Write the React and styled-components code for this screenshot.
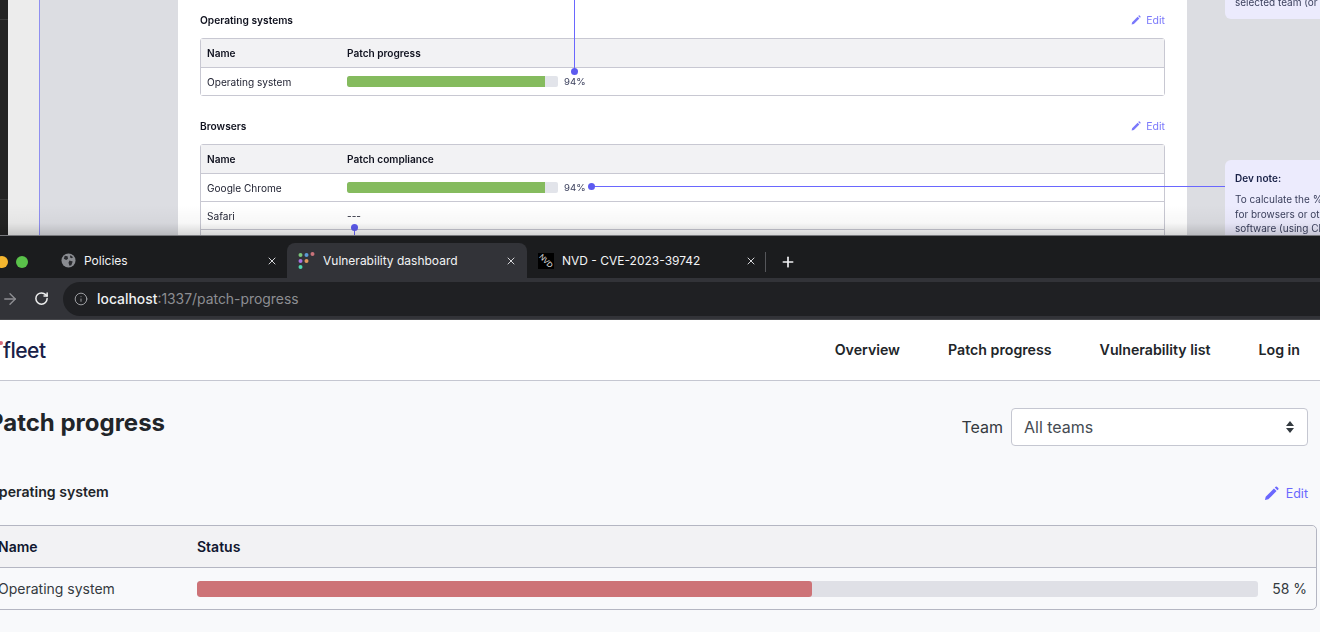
import React from "react";
import styled, { createGlobalStyle } from "styled-components";
import { X, Plus, ArrowRight, RotateCw, Info } from "lucide-react";

const GlobalStyle = createGlobalStyle`
  html, body {
    margin: 0;
    padding: 0;
    background: #f8f9fb;
  }
  body {
    width: 1320px;
    height: 632px;
    overflow: hidden;
    font-family: "Inter", "Liberation Sans", sans-serif;
  }
  * { box-sizing: border-box; }
`;

const PencilIcon = ({ size }) => (
  <svg width={size} height={size} viewBox="0 0 16 16" fill="currentColor">
    <path d="M1 15l.8-3.6L10.600 2.600l2.800 2.800-8.800 8.800L1 15zM11.500 1.700l.9-.9a1 1 0 0 1 1.400 0l1.400 1.400a1 1 0 0 1 0 1.400l-.9.9-2.800-2.800z" />
  </svg>
);

const Globe = () => (
  <svg width="15" height="15" viewBox="0 0 16 16">
    <circle cx="8" cy="8" r="7.500" fill="#8a8c91" />
    <path d="M4 3l3 .5.5 2.500-2 1.500L3 6zM9 8l3.500 1-1.500 4-2 .5-1-3zM10 2.500l3 2-2 1-1.500-1z" fill="#2a2b2f" />
  </svg>
);

const FigmaDots = () => (
  <svg width="17" height="18" viewBox="0 0 17 18">
    <circle cx="2.500" cy="3" r="2" fill="#7bc67a" />
    <circle cx="8.500" cy="3" r="2" fill="#5b9bd5" />
    <circle cx="14.500" cy="2" r="2" fill="#c9737a" />
    <circle cx="2.500" cy="9" r="2" fill="#a970e0" />
    <circle cx="8.500" cy="9" r="2" fill="#e0975b" />
    <circle cx="2.500" cy="15" r="2" fill="#4fd6b0" />
  </svg>
);

const NvdIcon = () => (
  <svg width="16" height="16" viewBox="0 0 16 16">
    <rect width="16" height="16" fill="#000" />
    <text
      x="8"
      y="10.500"
      fontSize="7.500"
      fill="#e8e8e8"
      textAnchor="middle"
      fontFamily="Liberation Sans, sans-serif"
      transform="rotate(45 8 8)"
    >
      NVD
    </text>
  </svg>
);

const SelectArrows = () => (
  <svg width="8" height="12" viewBox="0 0 8 12" fill="#343a40">
    <path d="M0 5l4-5 4 5zM0 7l4 5 4-5z" />
  </svg>
);

const MockProgress = ({ value }) => (
  <MockBarWrap>
    <MockTrack>
      <MockFill style={{ width: `${value}%` }} />
    </MockTrack>
    <MockPercent>{value}%</MockPercent>
  </MockBarWrap>
);

const App = () => (
  <Screen>
    <GlobalStyle />

    <FigmaArea>
      <Rail />
      <Sidebar />
      <Card>
        <MockHead>
          <MockTitle>Operating systems</MockTitle>
          <MockEdit>
            <PencilIcon size={10} />
            Edit
          </MockEdit>
        </MockHead>
        <MockTable>
          <MockRow $head>
            <span>Name</span>
            <span>Patch progress</span>
          </MockRow>
          <MockRow>
            <span>Operating system</span>
            <MockProgress value={94} />
          </MockRow>
        </MockTable>

        <MockHead $spaced>
          <MockTitle>Browsers</MockTitle>
          <MockEdit>
            <PencilIcon size={10} />
            Edit
          </MockEdit>
        </MockHead>
        <MockTable>
          <MockRow $head>
            <span>Name</span>
            <span>Patch compliance</span>
          </MockRow>
          <MockRow>
            <span>Google Chrome</span>
            <MockProgress value={94} />
          </MockRow>
          <MockRow>
            <span>Safari</span>
            <span>---</span>
          </MockRow>
          <MockRow />
        </MockTable>
      </Card>
      <Notes>
        <Note $clipped>
          <NoteText>selected team (or</NoteText>
        </Note>
        <Note>
          <NoteTitle>Dev note:</NoteTitle>
          <NoteText>
            To calculate the %
            <br />
            for browsers or oth
            <br />
            software (using Ch
          </NoteText>
        </Note>
      </Notes>

      <PinLine $x={574} $y={0} $h={71} />
      <PinDot $x={574} $y={71} />
      <PinLine $horizontal $x={591} $y={186} $w={634} />
      <PinDot $x={591} $y={186} />
      <PinLine $x={354} $y={227} $h={8} />
      <PinDot $x={354} $y={227} />
      <Fade />
    </FigmaArea>

    <BrowserBar>
      <TabStrip>
        <Lights>
          <Light $color="#f4b62f" />
          <Light $color="#5ac24a" />
        </Lights>
        <Tab $width={226} $left={0} $right={9}>
          <Globe />
          <TabLabel>Policies</TabLabel>
          <TabClose>
            <X size={12} strokeWidth={2} />
          </TabClose>
        </Tab>
        <Tab $active $width={240} $left={11} $right={10}>
          <FigmaDots />
          <TabLabel>Vulnerability dashboard</TabLabel>
          <TabClose>
            <X size={12} strokeWidth={2} />
          </TabClose>
        </Tab>
        <Tab $width={238} $left={11} $right={8}>
          <NvdIcon />
          <TabLabel>NVD - CVE-2023-39742</TabLabel>
          <TabClose>
            <X size={12} strokeWidth={2} />
          </TabClose>
        </Tab>
        <TabDivider />
        <NewTab>
          <Plus size={16} strokeWidth={2.5} />
        </NewTab>
      </TabStrip>
      <Toolbar>
        <NavArrow>
          <ArrowRight size={18} strokeWidth={1.8} />
        </NavArrow>
        <Reload>
          <RotateCw size={15} strokeWidth={2.4} />
        </Reload>
        <UrlPill>
          <Info size={14} strokeWidth={1.6} color="#a5a6aa" />
          <Url>
            <b>localhost</b>:1337/patch-progress
          </Url>
        </UrlPill>
      </Toolbar>
    </BrowserBar>

    <Page>
      <Header>
        <Logo>
          <LogoDot />
          fleet
        </Logo>
        <Nav>
          <NavLink>Overview</NavLink>
          <NavLink>Patch progress</NavLink>
          <NavLink>Vulnerability list</NavLink>
          <NavLink>Log in</NavLink>
        </Nav>
      </Header>
      <Main>
        <TitleRow>
          <Title>Patch progress</Title>
          <TeamPicker>
            <TeamLabel>Team</TeamLabel>
            <TeamSelect>
              All teams
              <SelectArrows />
            </TeamSelect>
          </TeamPicker>
        </TitleRow>
        <SectionHead>
          <SectionTitle>Operating system</SectionTitle>
          <EditLink>
            <PencilIcon size={15} />
            Edit
          </EditLink>
        </SectionHead>
        <Table>
          <TableHead>
            <span>Name</span>
            <span>Status</span>
          </TableHead>
          <TableRow>
            <span>Operating system</span>
            <Progress>
              <Track>
                <Fill style={{ width: "58%" }} />
              </Track>
              <Percent>58 %</Percent>
            </Progress>
          </TableRow>
        </Table>
      </Main>
    </Page>
  </Screen>
);

export default App;

const Screen = styled.div`
  width: 1320px;
  height: 632px;
  overflow: hidden;
  background: #f8f9fb;
`;

const FigmaArea = styled.section`
  position: relative;
  display: flex;
  height: 235px;
  overflow: hidden;
  background: #dcdde2;
  color: #192147;
  font-size: 10.100px;
`;

const Rail = styled.div`
  flex: 0 0 8px;
  background: linear-gradient(
    #232323 0 19px,
    #3a3a3a 19px 20px,
    #232323 20px 199px,
    #3a3a3a 199px 200px,
    #232323 200px
  );
`;

const Sidebar = styled.div`
  flex: 0 0 170px;
  background: linear-gradient(90deg, #ececec 0 31px, #8f8ff0 31px 32px, #dcdde2 32px);
`;

const Card = styled.div`
  flex: 0 0 1009px;
  padding: 13px 22px 0;
  background: #fff;
  filter: blur(0.3px);
`;

const MockHead = styled.div`
  display: flex;
  justify-content: space-between;
  align-items: center;
  height: 14px;
  margin-top: ${(p) => (p.$spaced ? "23px" : "0")};
  margin-bottom: 11px;
`;

const MockTitle = styled.h3`
  margin: 0;
  font-size: 10.200px;
  font-weight: 600;
  color: #10121f;
`;

const MockEdit = styled.span`
  display: flex;
  align-items: center;
  gap: 5px;
  margin-left: -1px;
  color: #7a78fb;
  font-size: 10.500px;
`;

const MockTable = styled.div`
  border: 1px solid #c8c8d2;
  border-radius: 3px;
`;

const MockRow = styled.div`
  display: grid;
  grid-template-columns: 140px 1fr;
  align-items: center;
  height: 28px;
  padding: 0 6px;
  background: ${(p) => (p.$head ? "#f2f2f4" : "#fff")};
  font-weight: ${(p) => (p.$head ? 600 : 400)};
  color: ${(p) => (p.$head ? "#10121f" : "#1c1e2e")};

  & + & {
    border-top: 1px solid #c8c8d2;
  }
`;

const MockBarWrap = styled.div`
  display: flex;
  align-items: center;
  gap: 6px;
`;

const MockTrack = styled.div`
  width: 211px;
  height: 11px;
  border-radius: 2px;
  background: #e2e4ea;
  overflow: hidden;
`;

const MockFill = styled.div`
  height: 100%;
  border-radius: 2px 0 0 2px;
  background: #85bb5e;
`;

const MockPercent = styled.span`
  font-size: 9.600px;
  color: #3a3f5c;
`;

const Notes = styled.aside`
  display: flex;
  flex-direction: column;
  flex: 0 0 auto;
  gap: 141px;
  margin-left: 38px;
  margin-top: -20px;
  filter: blur(0.3px);
`;

const Note = styled.div`
  flex-shrink: 0;
  width: 180px;
  height: ${(p) => (p.$clipped ? "39px" : "100px")};
  padding: ${(p) => (p.$clipped ? "15px 10px 0" : "12px 10px 0")};
  border-radius: 6px;
  background: #ecebfd;
`;

const NoteTitle = styled.div`
  margin-bottom: 8px;
  font-size: 10px;
  line-height: 12px;
  font-weight: 600;
  color: #192147;
`;

const NoteText = styled.div`
  font-size: 10px;
  line-height: 14.500px;
  color: #3a3f5c;
`;

const PinLine = styled.div`
  position: absolute;
  left: ${(p) => p.$x}px;
  top: ${(p) => p.$y}px;
  width: ${(p) => (p.$horizontal ? `${p.$w}px` : "1px")};
  height: ${(p) => (p.$horizontal ? "1px" : `${p.$h}px`)};
  background: #6a67fe;
`;

const PinDot = styled.div`
  position: absolute;
  left: ${(p) => p.$x - 3}px;
  top: ${(p) => p.$y - 3}px;
  width: 7px;
  height: 7px;
  border-radius: 50%;
  background: #5d5bf0;
`;

const Fade = styled.div`
  position: absolute;
  left: 0;
  right: 0;
  bottom: 0;
  height: 30px;
  background: linear-gradient(
    rgba(0, 0, 0, 0),
    rgba(0, 0, 0, 0.03) 60%,
    rgba(0, 0, 0, 0.16)
  );
  pointer-events: none;
`;

const BrowserBar = styled.div`
  height: 85px;
  border-top: 1px solid #77787c;
  background: #1b1c1e;
  color: #e8e9eb;
`;

const TabStrip = styled.div`
  display: flex;
  align-items: flex-end;
  height: 42px;
  padding-top: 7px;
`;

const Lights = styled.div`
  display: flex;
  gap: 8px;
  flex: 0 0 65px;
  align-self: center;
  margin-left: -4px;
  margin-top: 2px;
`;

const Light = styled.div`
  width: 12px;
  height: 12px;
  border-radius: 50%;
  background: ${(p) => p.$color};
`;

const Tab = styled.div`
  display: flex;
  align-items: center;
  flex: 0 0 ${(p) => p.$width}px;
  height: 35px;
  gap: 8px;
  padding: 0 ${(p) => p.$right}px 0 ${(p) => p.$left}px;
  border-radius: 8px 8px 0 0;
  background: ${(p) => (p.$active ? "#323338" : "transparent")};
  font-size: 12px;
  color: #f2f3f5;
`;

const TabLabel = styled.span`
  flex: 1;
  white-space: nowrap;
  overflow: hidden;
`;

const TabClose = styled.span`
  display: flex;
  color: #d6d7da;
`;

const TabDivider = styled.div`
  flex: 0 0 1px;
  align-self: center;
  height: 20px;
  margin-top: 3px;
  background: #55565a;
`;

const NewTab = styled.div`
  display: flex;
  align-self: center;
  margin: 2px 0 0 14px;
  color: #f1f1f3;
`;

const Toolbar = styled.div`
  display: flex;
  align-items: center;
  height: 42px;
  background: #323338;
  border-bottom: 1px solid #46474b;
`;

const NavArrow = styled.div`
  display: flex;
  margin-left: 1px;
  color: #8e8f93;
`;

const Reload = styled.div`
  display: flex;
  margin-left: 15px;
  color: #eceded;
`;

const UrlPill = styled.div`
  display: flex;
  align-items: center;
  flex: 1;
  gap: 9px;
  height: 34px;
  margin-left: 14px;
  padding-left: 11px;
  border-radius: 17px 0 0 17px;
  background: #1f2023;
`;

const Url = styled.span`
  font-size: 13.900px;
  color: #8d8e92;

  b {
    font-weight: 500;
    color: #eef0f2;
  }
`;

const Page = styled.div`
  color: #212529;
`;

const Header = styled.header`
  display: flex;
  justify-content: space-between;
  align-items: center;
  height: 61px;
  padding-right: 20px;
  background: #fff;
  border-bottom: 1px solid #c5c7d1;
`;

const Logo = styled.div`
  position: relative;
  margin-left: 3px;
  font-size: 21px;
  font-weight: 500;
  letter-spacing: -0.5px;
  color: #192147;
`;

const LogoDot = styled.span`
  position: absolute;
  left: -4px;
  top: 3px;
  width: 4px;
  height: 4px;
  border-radius: 50%;
  background: #d66c7b;
`;

const Nav = styled.nav`
  display: flex;
  gap: 48px;
  margin-top: -1px;
`;

const NavLink = styled.a`
  font-size: 14.200px;
  font-weight: 600;
  color: #212529;
`;

const Main = styled.main`
  margin-left: -12px;
  padding-right: 12px;
`;

const TitleRow = styled.div`
  display: flex;
  justify-content: space-between;
  align-items: flex-start;
  height: 86px;
  padding-top: 27px;
`;

const Title = styled.h1`
  margin: 0;
  font-size: 24px;
  line-height: 29px;
  font-weight: 700;
`;

const TeamPicker = styled.div`
  display: flex;
  align-items: center;
  gap: 8px;
`;

const TeamLabel = styled.span`
  font-size: 16px;
  color: #343a40;
`;

const TeamSelect = styled.div`
  display: flex;
  justify-content: space-between;
  align-items: center;
  width: 297px;
  height: 38px;
  padding: 0 13px 0 12px;
  border: 1px solid #c5c7d1;
  border-radius: 4px;
  background: #fff;
  font-size: 16px;
  color: #454b52;
`;

const SectionHead = styled.div`
  display: flex;
  justify-content: space-between;
  align-items: center;
  height: 20px;
  margin-top: 16px;
  margin-bottom: 22px;
`;

const SectionTitle = styled.h2`
  margin: 0 0 4px;
  font-size: 14.100px;
  font-weight: 600;
`;

const EditLink = styled.a`
  display: flex;
  align-items: center;
  gap: 7px;
  font-size: 12.500px;
  color: #6a67fe;
`;

const Table = styled.div`
  margin: 0 -9px 0 -2px;
  border: 1px solid #b4b6c2;
  border-radius: 5px;
  font-size: 14px;
`;

const TableHead = styled.div`
  display: grid;
  grid-template-columns: 199px 1fr;
  align-items: center;
  height: 42px;
  padding: 0 11px;
  background: #f2f2f4;
  border-radius: 5px 5px 0 0;
  border-bottom: 1px solid #b4b6c2;
  font-weight: 600;
  color: #10162f;
`;

const TableRow = styled.div`
  display: grid;
  grid-template-columns: 199px 1fr;
  align-items: center;
  height: 41px;
  padding: 0 9px 0 11px;
  color: #343a40;
`;

const Progress = styled.div`
  display: flex;
  align-items: center;
  justify-content: space-between;
`;

const Track = styled.div`
  width: 1061px;
  height: 16px;
  border-radius: 3px;
  background: #dfe0e6;
  overflow: hidden;
`;

const Fill = styled.div`
  height: 100%;
  border-radius: 3px;
  background: #cd7377;
`;

const Percent = styled.span`
  white-space: nowrap;
`;
